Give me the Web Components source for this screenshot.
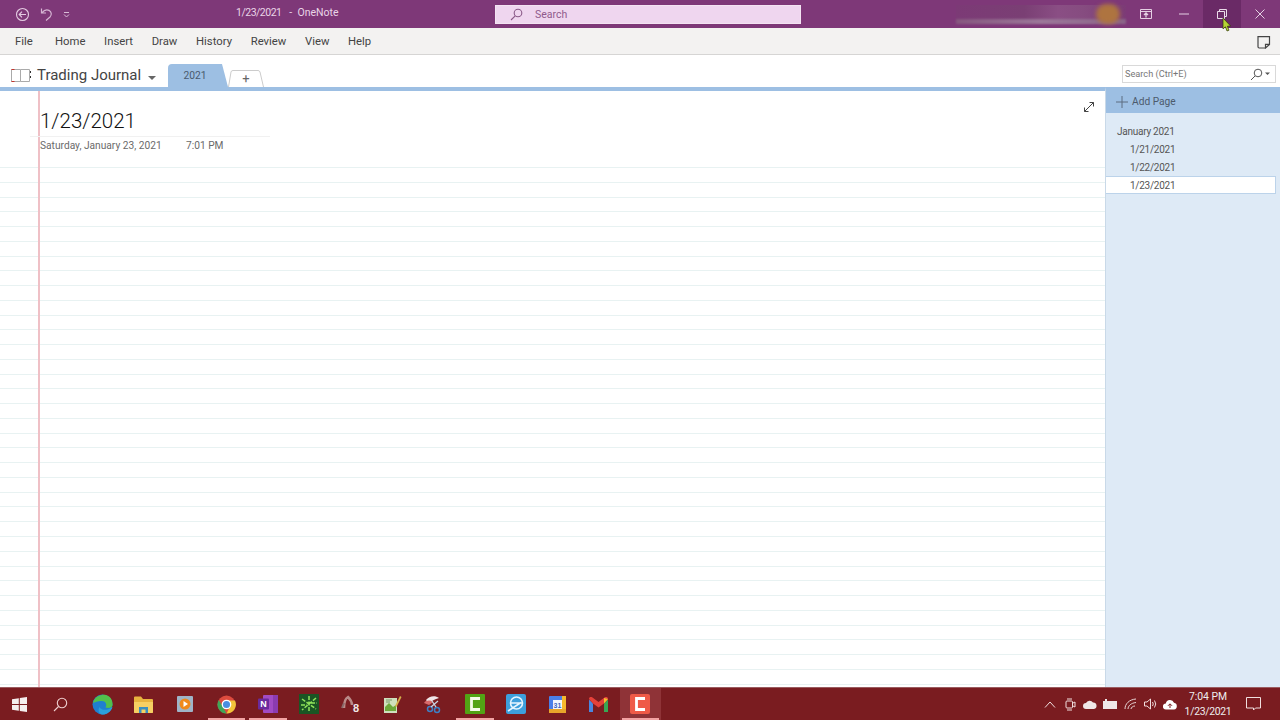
<!DOCTYPE html>
<html lang="en">
<head>
<meta charset="utf-8">
<title>1/23/2021 - OneNote</title>
<style>
  html, body { margin: 0; height: 100%; overflow: hidden; background: #fff; }
  body { font-family: Roboto, "Noto Sans", "Liberation Sans", sans-serif; }
  onenote-app { height: 720px; }
</style>
</head>
<body>
<onenote-app>
  <title-bar slot="top" doc="1/23/2021" app="OneNote"></title-bar>
  <ribbon-tabs slot="top">
    <ribbon-tab style="margin-left:15px;width:21.300px">File</ribbon-tab>
    <ribbon-tab>Home</ribbon-tab>
    <ribbon-tab>Insert</ribbon-tab>
    <ribbon-tab>Draw</ribbon-tab>
    <ribbon-tab>History</ribbon-tab>
    <ribbon-tab>Review</ribbon-tab>
    <ribbon-tab>View</ribbon-tab>
    <ribbon-tab>Help</ribbon-tab>
  </ribbon-tabs>
  <notebook-bar slot="top" name="Trading Journal" section="2021"></notebook-bar>
  <page-canvas slot="main" title="1/23/2021" day="Saturday, January 23, 2021" time="7:01 PM"></page-canvas>
  <page-list slot="main">
    <page-entry level="0">January 2021</page-entry>
    <page-entry>1/21/2021</page-entry>
    <page-entry>1/22/2021</page-entry>
    <page-entry selected>1/23/2021</page-entry>
  </page-list>
  <task-bar slot="bottom"></task-bar>
</onenote-app>

<script>
class OnenoteApp extends HTMLElement {
  constructor() {
    super();
    this.attachShadow({ mode: 'open' }).innerHTML = `
<style>
  :host { display: flex; flex-direction: column; position: relative; }
  .main { flex: 1; display: flex; min-height: 0; }
  .cursor { position: absolute; left: 1222px; top: 18px; width: 9px; height: 14px; }
</style>
<slot name="top"></slot>
<div class="main"><slot name="main"></slot></div>
<slot name="bottom"></slot>
<svg class="cursor" viewBox="0 0 9 14"><path d="M1 0 L1 11 L3.4 8.8 L5 13 L7 12.2 L5.4 8.2 L8.6 8 Z" fill="#b5d334" stroke="#2f3a08" stroke-width=".7"/></svg>`;
  }
}

class TitleBar extends HTMLElement {
  constructor() {
    super();
    this.attachShadow({ mode: 'open' }).innerHTML = `
<style>
  :host { display: flex; height: 28px; background: #7e3878; color: #e9d5e7; font-size: 10.5px; align-items: stretch; position: relative; }
  .qat { display: flex; align-items: center; width: 236px; flex: none; }
  .qat svg { display: block; flex: none; }
  .title { width: 259px; flex: none; line-height: 26px; white-space: pre; }
  .title span { letter-spacing: -.5px; }
  .search { width: 306px; height: 19px; margin-top: 5px; flex: none; background: #efd6ef; color: #8f5a8c; display: flex; align-items: center; box-sizing: border-box; border: 1px solid #f3e3f2; line-height: 15px; padding-bottom: 1px; }
  .search svg { margin-left: 14px; margin-right: 12px; }
  .blur { flex: none; width: 170px; height: 19px; margin: 5px 0 0 155px; position: relative;
    background: linear-gradient(90deg, #7c3a76 0%, #7a3f74 40%, #8a4e84 60%, #864c80 75%, #7c3b76 100%);
    }
  .blur i { position: absolute; left: 140px; top: -1px; width: 24px; height: 20px; border-radius: 12px; background: #ae7440; filter: blur(2px); }
  .blur b { position: absolute; left: 0; right: 0; bottom: 0; height: 5px; background: linear-gradient(90deg, #86567f, #9c789a 50%, #8a6388); filter: blur(1px); }
  .ctl { flex: none; width: 38px; display: flex; align-items: center; justify-content: center; }
  .ctl.hover { background: #6a2a66; }
  .ctls { margin-left: auto; display: flex; margin-right: 1px; }
</style>
<div class="qat">
  <svg style="margin-left:15px" width="15" height="15" viewBox="0 0 15 15" fill="none" stroke="#e4cbe2" stroke-width="1.1"><circle cx="7.5" cy="7.5" r="6"/><path d="M11 7.5H4.2M7 4.7 4.2 7.5 7 10.3"/></svg>
  <svg style="margin-left:9px" width="15" height="15" viewBox="0 0 15 15" fill="none" stroke="#d5b5d3" stroke-width="1.2"><path d="M2.5 1.5V6H7M2.8 5.8C5 3.2 7.5 2.3 10 3.4c2.6 1.2 3 4.6 1 6.6L7 13.5"/></svg>
  <svg style="margin-left:9px" width="7" height="7" viewBox="0 0 7 7" fill="none" stroke="#d9bdd7"><path d="M1 1.5H6M1 3.5 3.5 6 6 3.5"/></svg>
</div>
<div class="title"><span>${this.getAttribute('doc')}</span>   -  ${this.getAttribute('app')}</div>
<div class="search">
  <svg width="13" height="13" viewBox="0 0 13 13" fill="none" stroke="#8a5a88" stroke-width="1.1"><circle cx="8" cy="5" r="3.8"/><path d="M5.2 7.8 1 12"/></svg>
  <span>Search</span>
</div>
<div class="blur"><b></b><i></i></div>
<div class="ctls">
  <div class="ctl"><svg width="12" height="10" viewBox="0 0 12 10" fill="none" stroke="#e4cfe3"><path d="M.5.5h11v9H.5z"/><path d="M.5 2.5h11" /><path d="M6 8.5V4M4 6l2-2 2 2" stroke-width="1.3"/></svg></div>
  <div class="ctl"><svg width="10" height="2" viewBox="0 0 10 2"><path d="M0 1h10" stroke="#e4cfe3"/></svg></div>
  <div class="ctl hover"><svg width="10" height="10" viewBox="0 0 10 10" fill="none" stroke="#eadbe9"><path d="M.5 2.5h7v7h-7z"/><path d="M2.5 2.5v-2h7v7h-2"/></svg></div>
  <div class="ctl"><svg width="10" height="10" viewBox="0 0 10 10" stroke="#e4cfe3"><path d="M.5.5l9 9M9.5.5l-9 9"/></svg></div>
</div>`;
  }
}

class RibbonTabs extends HTMLElement {
  constructor() {
    super();
    this.attachShadow({ mode: 'open' }).innerHTML = `
<style>
  :host { display: flex; height: 26px; background: #f3f2f1; border-bottom: 1px solid #d6d5d4; align-items: center; position: relative; color: #444; font-size: 11.3px; flex: none; }
  svg { position: absolute; left: 1257px; top: 7px; }
</style>
<slot></slot>
<svg width="14" height="14" viewBox="0 0 14 14" fill="none" stroke="#444" stroke-width="1.2"><path d="M8.5 13H2.2Q1 13 1 11.8V1.6h11.5V9.4L8.5 13V9.4h4"/></svg>`;
  }
}

class RibbonTab extends HTMLElement {
  constructor() {
    super();
    this.attachShadow({ mode: 'open' }).innerHTML = `
<style>:host { display: block; padding-right: 18.7px; white-space: nowrap; }</style><slot></slot>`;
  }
}

class NotebookBar extends HTMLElement {
  constructor() {
    super();
    this.attachShadow({ mode: 'open' }).innerHTML = `
<style>
  :host { display: flex; height: 32px; background: #fff; position: relative; align-items: flex-end; color: #444; box-sizing: border-box; flex: none; }
  .book { flex: none; margin: 0 0 5px 11px; align-self: flex-end; }
  .name { flex: none; width: 111px; margin-left: 6px; font-size: 15px; line-height: 20px; margin-bottom: 2px; white-space: nowrap; }
  .caret { flex: none; width: 0; height: 0; border: 4px solid transparent; border-top: 4px solid #666; border-bottom: 0; margin: 0 0 7px 0; }
  .tab { flex: none; margin-left: 12px; width: 60px; height: 23px; background: #9dbfe3; border-radius: 4px 6px 0 0; color: #4a5a6e; font-size: 10.3px; line-height: 23px; text-align: center; padding-right: 6px; box-sizing: border-box; clip-path: polygon(0 0, 54px 0, 100% 100%, 0 100%); }
  .add { flex: none; width: 36px; height: 17px; box-sizing: border-box; position: relative; font-size: 13px; line-height: 18px; text-align: center; color: #666; }
  .add svg { position: absolute; inset: 0; }
  .find { position: absolute; left: 1122px; top: 10px; width: 154px; height: 18px; box-sizing: border-box; border: 1px solid #d9d9d9; background: #fff; font-size: 9.2px; line-height: 16px; padding-left: 2px; color: #777; }
  .find svg { position: absolute; right: 4px; top: 2px; }
</style>
<svg class="book" width="20" height="13" viewBox="0 0 20 13" fill="none"><path d="M.5.5h9v12h-9zM9.5.5h9v12h-9" stroke="#aaa"/><path d="M.5.5h3" stroke="#c3342c"/><path d="M.5 12.5h3" stroke="#c3342c"/><path d="M19.5 2v2M19.5 7v2" stroke="#333"/></svg>
<div class="name">${this.getAttribute('name')}</div>
<div class="caret"></div>
<div class="tab">${this.getAttribute('section')}</div>
<div class="add">
  <svg width="36" height="17" viewBox="0 0 36 17" fill="none"><path d="M.5 17 3 2Q3.2.5 5 .5H30Q31.5.5 32 2L35.5 17" stroke="#ccc"/></svg>+
</div>
<div class="find">Search (Ctrl+E)
  <svg width="22" height="12" viewBox="0 0 22 12" fill="none" stroke="#555"><circle cx="9" cy="5" r="3.8"/><path d="M6 8 2 12"/><path d="M16 4.5h5l-2.500 2.500z" fill="#555" stroke="none"/></svg>
</div>`;
  }
}

class PageCanvas extends HTMLElement {
  constructor() {
    super();
    this.attachShadow({ mode: 'open' }).innerHTML = `
<style>
  :host { display: block; flex: 1; min-width: 0; position: relative; border-top: 4px solid #9dbfe3; background-color: #fff; border-right: 1px solid #c9d9e8;
    background-image: repeating-linear-gradient(180deg, #e8f2f2 0, #e8f2f2 1px, transparent 1px, transparent 14.76px);
    background-position: 0 76px; background-repeat: no-repeat; background-size: 100% 520px; }
  .margin { position: absolute; left: 38px; top: 0; bottom: 0; width: 2px; background: #efc0c6; }
  .head { padding: 15px 0 0 40px; position: relative; }
  h1 { margin: 0; font: 300 20.5px/30px Roboto, "Noto Sans", "Liberation Sans", sans-serif; color: #111; }
  .meta { width: 230px; margin-left: -10px; padding: 2px 0 0 10px; border-top: 1px solid #f1f1f1; font-size: 10.2px; line-height: 13px; color: #6a6a6a; display: flex; }
  .meta span:first-child { width: 146px; white-space: nowrap; }
  .expand { position: absolute; left: 1083px; top: 10px; }
</style>
<div class="margin"></div>
<div class="head">
  <h1>${this.getAttribute('title')}</h1>
  <div class="meta"><span>${this.getAttribute('day')}</span><span>${this.getAttribute('time')}</span></div>
</div>
<svg class="expand" width="12" height="12" viewBox="0 0 12 12" fill="none" stroke="#444"><path d="M1.500 10.500 10.500 1.500M6.500 1.500h4v4M1.500 6.500v4h4"/></svg>`;
    this.removeAttribute('title');
  }
}

class PageList extends HTMLElement {
  constructor() {
    super();
    this.attachShadow({ mode: 'open' }).innerHTML = `
<style>
  :host { display: block; flex: none; width: 174px; background: #deeaf6; border-top: 4px solid #9dbfe3; color: #555; box-sizing: border-box; }
  .add { height: 21px; background: #9dbfe3; display: flex; align-items: center; font-size: 10.2px; color: #4c5a6c; padding: 0 0 1px 10px; }
  .add svg { margin-right: 4px; }
  .list { padding-top: 9px; }
</style>
<div class="add"><svg width="12" height="12" viewBox="0 0 12 12" stroke="#5c6c80"><path d="M6 0v12M0 6h12"/></svg>Add Page</div>
<div class="list"><slot></slot></div>`;
  }
}

class PageEntry extends HTMLElement {
  constructor() {
    super();
    this.attachShadow({ mode: 'open' }).innerHTML = `
<style>
  :host { display: block; height: 18px; line-height: 20px; font-size: 10px; letter-spacing: -.25px; padding-left: 24px; box-sizing: border-box; white-space: nowrap; color: #555; }
  :host([level="0"]) { padding-left: 11px; }
  :host([selected]) { background: #fff; border: 1px solid #bcd3ea; border-left: 0; line-height: 18px; margin-right: 4px; width: 170px; }
</style><slot></slot>`;
  }
}

class TaskBar extends HTMLElement {
  constructor() {
    super();
    this.attachShadow({ mode: 'open' }).innerHTML = `
<style>
  :host { display: flex; height: 33px; flex: none; background: #7a1c20; color: #eee; position: relative; align-items: stretch; font-size: 10.4px; border-top: 1px solid #9a5c60; box-sizing: border-box; }
  .apps { display: grid; grid-auto-flow: column; grid-auto-columns: 41.4px; margin-left: -1.2px; }
  .app { display: flex; align-items: center; justify-content: center; position: relative; height: 32px; }
  .app svg { display: block; }
  .on::after { content: ""; position: absolute; left: 2px; right: 2px; bottom: 0; height: 2px; background: #f2a3a3; }
  .cur { background: #8f3337; }
  .tray { margin-left: auto; display: flex; align-items: center; }
  .t { width: 20px; display: flex; justify-content: center; }
  .clock { width: 64px; text-align: center; line-height: 15px; margin-left: -4px; }
  .clock span { letter-spacing: -.3px; }
  .note { width: 26px; padding-right: 14px; display: flex; justify-content: center; }
</style>
<div class="apps">
  <div class="app"><svg width="15" height="15" viewBox="0 0 15 15" fill="#f4eeee"><path d="M0 2.200 6.800 1.200V7H0zM7.800 1 15 0V7H7.800zM0 8H6.800V13.800L0 12.800zM7.800 8H15V15L7.800 14z"/></svg></div>
  <div class="app"><svg width="15" height="15" viewBox="0 0 15 15" fill="none" stroke="#eecfcf" stroke-width="1.1"><circle cx="9" cy="6" r="4.700"/><path d="M5.500 9.500 1 14"/></svg></div>
  <div class="app"><svg width="21" height="21" viewBox="0 0 21 21"><circle cx="10.500" cy="10.500" r="10" fill="#1f7fd0"/><path d="M1 9C2.500 2 9 .5 13 .8 18 1.500 21 6 20.500 11.500 20 14 16 14.500 13.500 13.500 15.500 10.500 13.500 7 10 7 5 7 2.500 8.500 1 9Z" fill="#52c04c"/><path d="M20.500 13C19 18 14 21 10 20.500 7 20 5.500 16 7.500 13 9 16.500 15 17 20.500 13Z" fill="#2a9fdc"/></svg></div>
  <div class="app"><svg width="19" height="17" viewBox="0 0 19 17"><path d="M0 1.500Q0 .5 1 .5H7L9 3H18Q19 3 19 4V16Q19 17 18 17H1Q0 17 0 16Z" fill="#e8b33f"/><path d="M0 6H19V16Q19 17 18 17H1Q0 17 0 16Z" fill="#f6cf63"/><path d="M5 17V11H14V17H11.500V13.500H7.500V17Z" fill="#3a8fc0"/></svg></div>
  <div class="app"><svg width="16" height="16" viewBox="0 0 16 16"><rect width="16" height="16" rx="1" fill="#9fb4c8"/><circle cx="8" cy="8" r="5.500" fill="#f08a1c"/><path d="M6.500 5 11 8 6.500 11Z" fill="#fff"/></svg></div>
  <div class="app on"><svg width="19" height="19" viewBox="0 0 19 19"><circle cx="9.500" cy="9.500" r="9" fill="#dd4b3e"/><path d="M9.500 5.500H18A9 9 0 0 1 9.500 18.500L13 11.500Z" fill="#f2c43a"/><path d="M1.700 5 6 12 9.500 18.500A9 9 0 0 1 1.700 5Z" fill="#3fa757"/><circle cx="9.500" cy="9.500" r="4.200" fill="#4a8fe0" stroke="#fff" stroke-width="1.300"/></svg></div>
  <div class="app on"><svg width="20" height="18" viewBox="0 0 20 18"><rect x="5" y="0" width="15" height="18" rx="1" fill="#a24bc4"/><rect x="15" y="0" width="5" height="18" fill="#8b3bb0"/><rect x="0" y="3.500" width="11" height="11" rx="1" fill="#6a2a9c"/><text x="2.300" y="12.300" font-family="Liberation Sans, sans-serif" font-size="9" font-weight="700" fill="#fff">N</text></svg></div>
  <div class="app"><svg width="20" height="20" viewBox="0 0 20 20"><rect width="20" height="20" fill="#1a5524"/><path d="M10 2V18M3 5 17 15M17 4 3 16M2 11H8M12 9H18" stroke="#8fe35a" stroke-width="1.500" stroke-dasharray="4 1.500"/></svg></div>
  <div class="app"><svg width="20" height="18" viewBox="0 0 20 18"><path d="M3 13C3 7 5 3 7 2 9 4 11 7 11 10" fill="none" stroke="#b98a88" stroke-width="2.500"/><path d="M1 13 3 8" stroke="#8a6a6a" stroke-width="2"/><text x="12" y="17" font-family="Liberation Sans, sans-serif" font-size="11" font-weight="700" fill="#f0e8e8">8</text></svg></div>
  <div class="app"><svg width="19" height="19" viewBox="0 0 19 19"><path d="M1 3H14V18H1Z" fill="#cfe0bd"/><path d="M2 12 6 8 10 12 13 10V16H2Z" fill="#6da83a"/><path d="M3 5H9M3 7H7" stroke="#7a9a6a"/><path d="M12 11 17 1 18.500 2 13.500 12Z" fill="#d6b04a"/></svg></div>
  <div class="app"><svg width="20" height="19" viewBox="0 0 20 19"><path d="M3 5C6 1 12 0 16 3 12 4 8 6 6 9Z" fill="#efe6e8"/><path d="M1 8C3 5 7 5 10 7L6 10Z" fill="#d86a6a"/><circle cx="7" cy="14" r="2.500" fill="none" stroke="#3f7fc4" stroke-width="1.500"/><circle cx="14" cy="15" r="2.500" fill="none" stroke="#3f7fc4" stroke-width="1.500"/><path d="M8 12 15 6M13 12 9 6" stroke="#c9d3e0" stroke-width="1.300"/></svg></div>
  <div class="app on"><svg width="20" height="20" viewBox="0 0 20 20"><rect width="20" height="20" rx="1" fill="#52a314"/><path d="M15 4.500H6.500V15.500H15" fill="none" stroke="#f3fbe8" stroke-width="2.800"/></svg></div>
  <div class="app"><svg width="20" height="20" viewBox="0 0 20 20"><rect width="20" height="20" rx="2" fill="#3d9fdc"/><circle cx="10.500" cy="9" r="6" fill="none" stroke="#e6f5ff" stroke-width="1.600"/><path d="M2 17 15 8.500M5 9H16" stroke="#e6f5ff" stroke-width="1.500"/></svg></div>
  <div class="app"><svg width="17" height="17" viewBox="0 0 17 17"><rect width="17" height="17" rx="1" fill="#4a7fe8"/><rect x="13" y="0" width="4" height="13" fill="#f5b92e"/><rect x="0" y="13" width="17" height="4" fill="#e8a52a"/><rect x="4" y="4" width="9" height="9" fill="#f3f6fc"/><text x="4.500" y="11.500" font-family="Liberation Sans, sans-serif" font-size="7" font-weight="700" fill="#3a66c0">31</text></svg></div>
  <div class="app"><svg width="19" height="15" viewBox="0 0 19 15"><path d="M0 2.500V15H4V6.500Z" fill="#4a86e0"/><path d="M19 2.500V15H15V6.500Z" fill="#38a853"/><path d="M0 2C0 0 2 -.5 3.500 .5L9.500 5 15.500 .5C17 -.5 19 0 19 2L15 6.500 9.500 10.500 4 6.500Z" fill="#e5413a"/><path d="M15 .9 19 2 15 6.500Z" fill="#f5bf2e"/></svg></div>
  <div class="app cur on"><svg width="20" height="20" viewBox="0 0 20 20"><rect width="20" height="20" rx="2" fill="#ef5a47"/><path d="M15 4.500H6.500V15.500H15" fill="none" stroke="#fff" stroke-width="2.800"/></svg></div>
</div>
<div class="tray">
  <div class="t"><svg width="12" height="7" viewBox="0 0 12 7" fill="none" stroke="#f0dede"><path d="M1 6.500 6 1l5 5.500"/></svg></div>
  <div class="t"><svg width="11" height="13" viewBox="0 0 11 13" fill="none" stroke="#f0dede"><rect x="1" y="3" width="6.500" height="7" rx="1"/><path d="M8 5l2-1v5L8 8M2 1h5M2 12h5"/></svg></div>
  <div class="t"><svg width="14" height="9" viewBox="0 0 14 9" fill="#efe7e7"><path d="M3 9A3 3 0 0 1 3 3 4 4 0 0 1 10 2.500 3.300 3.300 0 0 1 11 9Z"/></svg></div>
  <div class="t"><svg width="14" height="10" viewBox="0 0 14 10" fill="#efe7e7"><path d="M0 2H2V0H4V2H14V10H0Z"/></svg></div>
  <div class="t"><svg width="13" height="12" viewBox="0 0 13 12" fill="none" stroke="#e8d5d5"><path d="M1 11C1 6 5 1.500 12 1M4 11C4 8 7 5 12 4.500M7 11C7 9.500 9 8 11 8"/></svg></div>
  <div class="t"><svg width="13" height="12" viewBox="0 0 13 12" fill="none" stroke="#f0dede"><path d="M.5 4H3L6.500 1V11L3 8H.5ZM8.500 4Q10 6 8.500 8M10.500 2.500Q13 6 10.500 9.500"/></svg></div>
  <div class="t"><svg width="14" height="11" viewBox="0 0 14 11"><path d="M3 10.500A3 3 0 0 1 2.800 4.500 4.300 4.300 0 0 1 11 3.800 3.400 3.400 0 0 1 11 10.500Z" fill="#fff"/><path d="M7 9V5M5 6.800 7 4.800 9 6.800" stroke="#7a1c20" fill="none"/></svg></div>
  <div class="clock">7:04 PM<br><span>1/23/2021</span></div>
  <div class="note"><svg width="15" height="14" viewBox="0 0 15 14" fill="none" stroke="#f0dede"><path d="M.5.500h14v10.500h-5l-2 2v-2H.5z"/></svg></div>
</div>`;
  }
}

customElements.define('onenote-app', OnenoteApp);
customElements.define('title-bar', TitleBar);
customElements.define('ribbon-tabs', RibbonTabs);
customElements.define('ribbon-tab', RibbonTab);
customElements.define('notebook-bar', NotebookBar);
customElements.define('page-canvas', PageCanvas);
customElements.define('page-list', PageList);
customElements.define('page-entry', PageEntry);
customElements.define('task-bar', TaskBar);
</script>
</body>
</html>
